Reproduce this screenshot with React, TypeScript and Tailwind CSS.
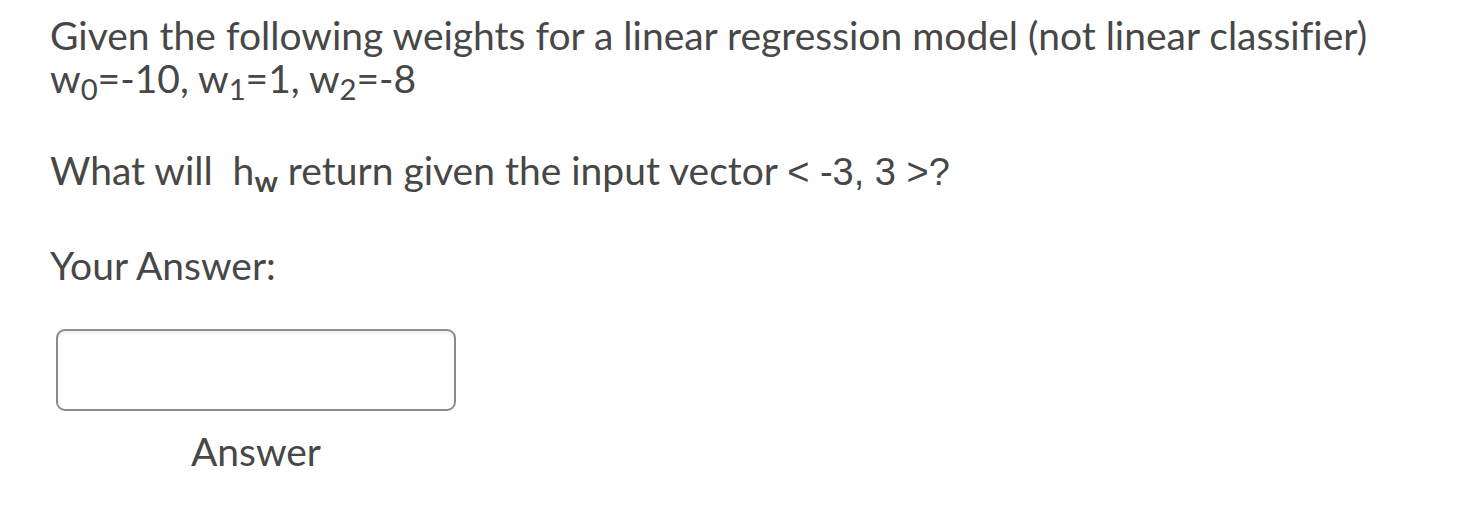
export default function App() {
  return (
    <div className="w-[1470px] h-[506px] bg-white text-[#474747] font-['Lato',sans-serif] text-[39px] leading-[43px] pl-[50px] pt-[14px] [font-variant-ligatures:none]">
      <p>Given the following weights for a linear regression model (not linear classifier)</p>
      <p>
        w<sub className="text-[0.75em]">0</sub>=-10, w<sub className="text-[0.75em]">1</sub>=1, w<sub className="text-[0.75em]">2</sub>=-8
      </p>
      <p className="mt-[49px]">
        What will&nbsp; h<sub className="text-[0.75em] font-bold">w</sub> return given the input vector{" "}
        <span className="font-['Liberation_Sans',sans-serif] text-[38px]">&lt; -3, 3 &gt;?</span>
      </p>
      <p className="mt-[50px]">Your Answer:</p>
      <div className="mt-[42px] ml-[6px] w-[400px] h-[82px] rounded-[9px] border-2 border-[#878b8e] shadow-[inset_0_3px_2px_rgba(0,0,0,0.05)]" />
      <div className="w-[412px] text-center mt-[19px]">Answer</div>
    </div>
  );
}
